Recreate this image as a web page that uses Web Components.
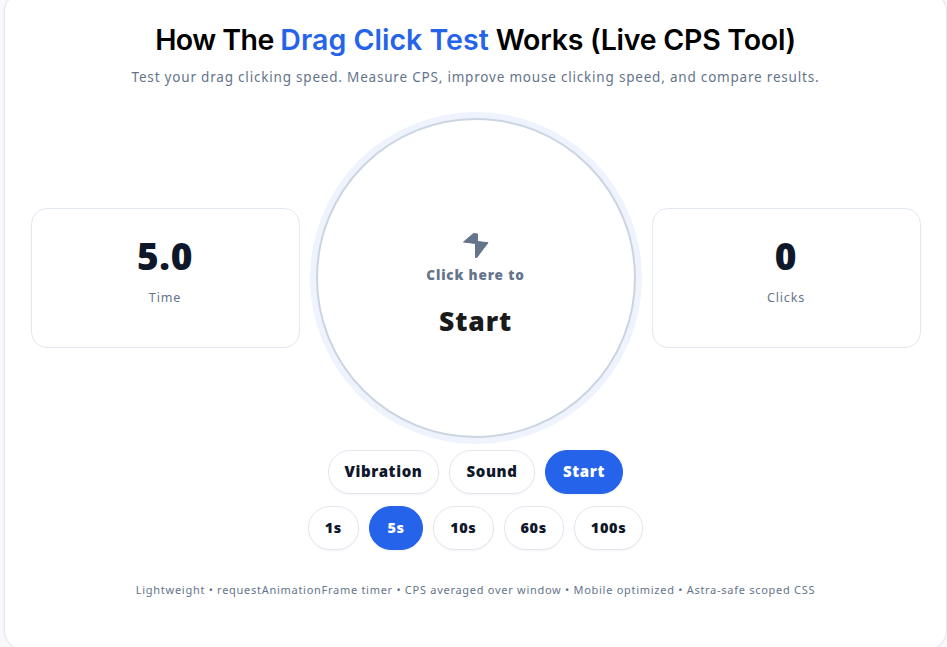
<!DOCTYPE html>
<html lang="en">
<head>
<meta charset="utf-8">
<title>Drag Click Test</title>
<style>
  html, body { margin: 0; height: 100%; background: #f9f9fb; overflow: hidden; }
  body { font-family: "Noto Sans", "Open Sans", sans-serif; }
</style>
</head>
<body>
<cps-tool>
  <span slot="before">How The </span><span slot="accent">Drag Click Test</span><span slot="after"> Works (Live CPS Tool)</span>
  <span slot="sub">Test your drag clicking speed. Measure CPS, improve mouse clicking speed, and compare results.</span>
  <stat-card slot="left" value="5.0" label="Time"></stat-card>
  <click-circle slot="center"></click-circle>
  <stat-card slot="right" value="0" label="Clicks"></stat-card>
  <pill-button slot="actions">Vibration</pill-button>
  <pill-button slot="actions">Sound</pill-button>
  <pill-button slot="actions" active>Start</pill-button>
  <pill-button slot="times" compact>1s</pill-button>
  <pill-button slot="times" compact active>5s</pill-button>
  <pill-button slot="times" compact>10s</pill-button>
  <pill-button slot="times" compact>60s</pill-button>
  <pill-button slot="times" compact>100s</pill-button>
  <span slot="foot">Lightweight • requestAnimationFrame timer • CPS averaged over window • Mobile optimized • Astra-safe scoped CSS</span>
</cps-tool>
<script>
class CpsTool extends HTMLElement {
  constructor() {
    super();
    this.attachShadow({ mode: 'open' }).innerHTML = `
      <style>
        :host { display: block; box-sizing: border-box; width: 943px; height: 658px; margin: -8px 0 0 4px;
          background: #fff; border: 1px solid #e2e8f3; border-radius: 20px;
          box-shadow: 0 0 3px rgba(15,23,42,.06); padding: 27px 26px 0; }
        h1 { margin: 0; text-align: center; font: 600 28.5px/40px Inter, sans-serif; color: #000; letter-spacing: -.25px; white-space: pre; }
        h1 .lead { letter-spacing: -.55px; }
        h1 .accent { color: #2563eb; letter-spacing: .02px; }
        p { margin: 7px 0 0; text-align: center; font-size: 13.5px; line-height: 20px; letter-spacing: .8px; color: #64748b; }
        .stage { display: grid; grid-template-columns: 269px 320px 269px; column-gap: 16px; justify-content: center; align-items: center; margin-top: 31px; }
        .row { display: flex; justify-content: center; gap: 10px; }
        .actions { margin-top: 12px; }
        .times { margin-top: 12px; }
        .foot { margin-top: 32px; text-align: center; font-size: 11px; line-height: 16px; letter-spacing: .72px; color: #64748b; }
      </style>
      <h1><span class="lead"><slot name="before"></slot></span><span class="accent"><slot name="accent"></slot></span><slot name="after"></slot></h1>
      <p><slot name="sub"></slot></p>
      <div class="stage"><slot name="left"></slot><slot name="center"></slot><slot name="right"></slot></div>
      <div class="row actions"><slot name="actions"></slot></div>
      <div class="row times"><slot name="times"></slot></div>
      <div class="foot"><slot name="foot"></slot></div>`;
  }
}

class StatCard extends HTMLElement {
  constructor() {
    super();
    this.attachShadow({ mode: 'open' }).innerHTML = `
      <style>
        :host { display: flex; flex-direction: column; align-items: center; box-sizing: border-box; height: 140px;
          background: #fff; border: 1px solid #e2e8f0; border-radius: 16px; padding-top: 23px; }
        .value { font-size: 37px; line-height: 48px; font-weight: 900; letter-spacing: .6px; color: #0f172a; }
        .label { margin-top: 9px; font-size: 12.5px; line-height: 18px; letter-spacing: .85px; color: #64748b; }
      </style>
      <div class="value"></div>
      <div class="label"></div>`;
  }
  connectedCallback() {
    this.shadowRoot.querySelector('.value').textContent = this.getAttribute('value');
    this.shadowRoot.querySelector('.label').textContent = this.getAttribute('label');
  }
}

class ClickCircle extends HTMLElement {
  constructor() {
    super();
    this.attachShadow({ mode: 'open' }).innerHTML = `
      <style>
        :host { display: flex; flex-direction: column; align-items: center; box-sizing: border-box; width: 320px; height: 320px;
          background: #fff; border: 2px solid #cbd5e1; border-radius: 50%; box-shadow: 0 0 0 6px #eef3fd; padding-top: 111px; }
        svg { display: block; width: 30px; height: 30px; }
        .hint { margin-top: 5px; font-size: 13.5px; line-height: 18px; font-weight: 900; letter-spacing: .85px; color: #64748b; }
        .go { margin-top: 18px; font-size: 26.5px; line-height: 38px; font-weight: 900; letter-spacing: .9px; color: #1a1a1a; }
      </style>
      <svg viewBox="0 0 30 30" fill="#64748b" stroke="#64748b" stroke-width="1" stroke-linejoin="round">
        <path d="M12.5 2.5 16.5 3v7.5l10.5 1.2L15.8 26.5h-1.3V12.5L2.5 11z"/>
      </svg>
      <div class="hint">Click here to</div>
      <div class="go">Start</div>`;
  }
}

class PillButton extends HTMLElement {
  constructor() {
    super();
    this.attachShadow({ mode: 'open' }).innerHTML = `
      <style>
        :host { display: inline-flex; align-items: center; box-sizing: border-box; height: 44px; padding: 0 16px 2px;
          background: #fff; border: 1px solid #e2e8f0; border-radius: 22px; box-shadow: 0 1px 2px rgba(15,23,42,.05);
          font-size: 15px; font-weight: 900; letter-spacing: .62px; color: #0f172a; }
        :host([compact]) { font-size: 14.5px; }
        :host([active]) { padding: 0 17.5px 2px; background: #2563eb; border-color: #2563eb; color: #fff; }
      </style>
      <slot></slot>`;
  }
}

customElements.define('cps-tool', CpsTool);
customElements.define('stat-card', StatCard);
customElements.define('click-circle', ClickCircle);
customElements.define('pill-button', PillButton);
</script>
</body>
</html>
